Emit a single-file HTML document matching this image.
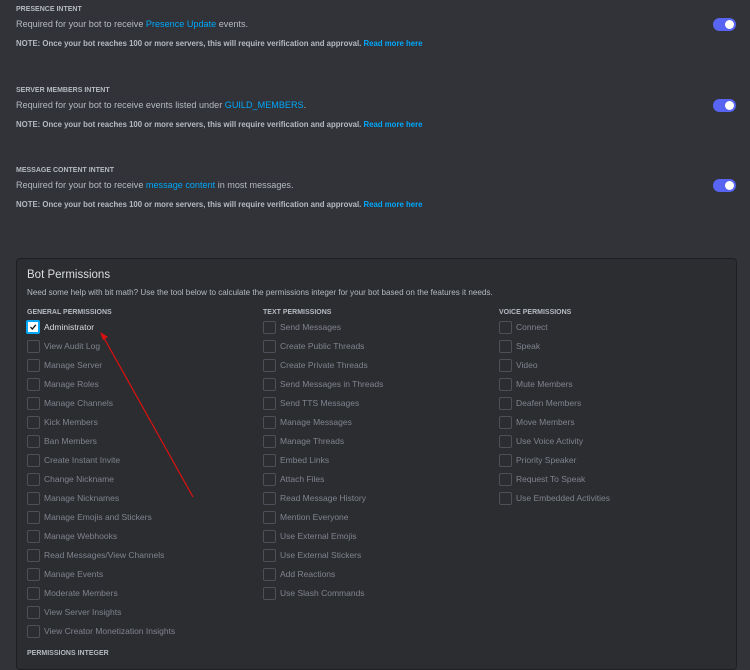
<!DOCTYPE html>
<html><head><style>
body{margin:0;width:750px;height:656px;background:#313338;font-family:"Liberation Sans",sans-serif;overflow:hidden;position:relative;color:#b5bac1}
.a{position:absolute;white-space:nowrap}
.h{font-size:7px;font-weight:bold;color:#b5bac1;text-transform:uppercase}
.d{font-size:9.1px;color:#b5bac1}
.n{font-size:7.8px;font-weight:bold;color:#b5bac1}
.l{color:#00a8fc}
.t{position:absolute;left:713px;width:23px;height:13px;border-radius:7px;background:#5865f2}
.t:after{content:"";position:absolute;right:2px;top:2px;width:9px;height:9px;border-radius:50%;background:#fff}
.p{position:absolute;left:16px;top:258px;width:719px;height:410px;background:#2b2d31;border:1px solid #1e1f22;border-radius:4px}
.cb{position:absolute;width:11px;height:11px;border:1px solid #4e5058;border-radius:2px}
.lab{position:absolute;font-size:8.5px;color:#80848e;white-space:nowrap}
</style></head><body>
<div class="a h" style="left:16px;top:6px">Presence Intent</div>
<div class="a d" style="left:16px;top:19px">Required for your bot to receive <span class="l">Presence Update</span> events.</div>
<div class="a n" style="left:16px;top:39px">NOTE: Once your bot reaches 100 or more servers, this will require verification and approval. <span class="l">Read more here</span></div>
<div class="t" style="top:18px"></div>
<div class="a h" style="left:16px;top:87px">Server Members Intent</div>
<div class="a d" style="left:16px;top:100px">Required for your bot to receive events listed under <span class="l">GUILD_MEMBERS</span>.</div>
<div class="a n" style="left:16px;top:120px">NOTE: Once your bot reaches 100 or more servers, this will require verification and approval. <span class="l">Read more here</span></div>
<div class="t" style="top:99px"></div>
<div class="a h" style="left:16px;top:167px">Message Content Intent</div>
<div class="a d" style="left:16px;top:180px">Required for your bot to receive <span class="l">message content</span> in most messages.</div>
<div class="a n" style="left:16px;top:200px">NOTE: Once your bot reaches 100 or more servers, this will require verification and approval. <span class="l">Read more here</span></div>
<div class="t" style="top:179px"></div>
<div class="p"></div>
<div class="a" style="left:27px;top:269px;font-size:11.5px;color:#dbdee1">Bot Permissions</div>
<div class="a d" style="left:27px;top:288px;font-size:8.1px">Need some help with bit math? Use the tool below to calculate the permissions integer for your bot based on the features it needs.</div>
<div class="a h" style="left:27px;top:309px">General Permissions</div>
<div class="a h" style="left:263px;top:309px">Text Permissions</div>
<div class="a h" style="left:499px;top:309px">Voice Permissions</div>
<div class="a h" style="left:27px;top:650px">Permissions Integer</div>
<div id="c"></div>
<svg class="a" style="left:0;top:0" width="750" height="656"><line x1="193" y1="497" x2="104" y2="338" stroke="#e01010" stroke-width="1.2"/><path d="M100 332 L108 337 L103 340 Z" fill="#e01010"/></svg>
<script>
var cols=[[27,["Administrator","View Audit Log","Manage Server","Manage Roles","Manage Channels","Kick Members","Ban Members","Create Instant Invite","Change Nickname","Manage Nicknames","Manage Emojis and Stickers","Manage Webhooks","Read Messages/View Channels","Manage Events","Moderate Members","View Server Insights","View Creator Monetization Insights"]],
[263,["Send Messages","Create Public Threads","Create Private Threads","Send Messages in Threads","Send TTS Messages","Manage Messages","Manage Threads","Embed Links","Attach Files","Read Message History","Mention Everyone","Use External Emojis","Use External Stickers","Add Reactions","Use Slash Commands"]],
[499,["Connect","Speak","Video","Mute Members","Deafen Members","Move Members","Use Voice Activity","Priority Speaker","Request To Speak","Use Embedded Activities"]]];
var h="";cols.forEach(function(c){c[1].forEach(function(t,i){var y=321+i*19;var on=(c[0]==27&&i==0);
h+='<div class="cb" style="left:'+c[0]+'px;top:'+y+'px;'+(on?'border:2px solid #00a8fc;width:10px;height:10px;left:26px;top:320px;background:#fff':'')+'">'+(on?'<svg width="10" height="10" style="position:absolute;left:0;top:0"><path d="M2.5 5 L4.3 7 L7.8 2.8" stroke="#111" stroke-width="1.3" fill="none"/></svg>':'')+'</div>';
h+='<div class="lab" style="left:'+(c[0]+17)+'px;top:'+(y+1)+'px;'+(on?'color:#dbdee1':'')+'">'+t+'</div>';});});
document.getElementById("c").innerHTML=h;
</script>
</body></html>
